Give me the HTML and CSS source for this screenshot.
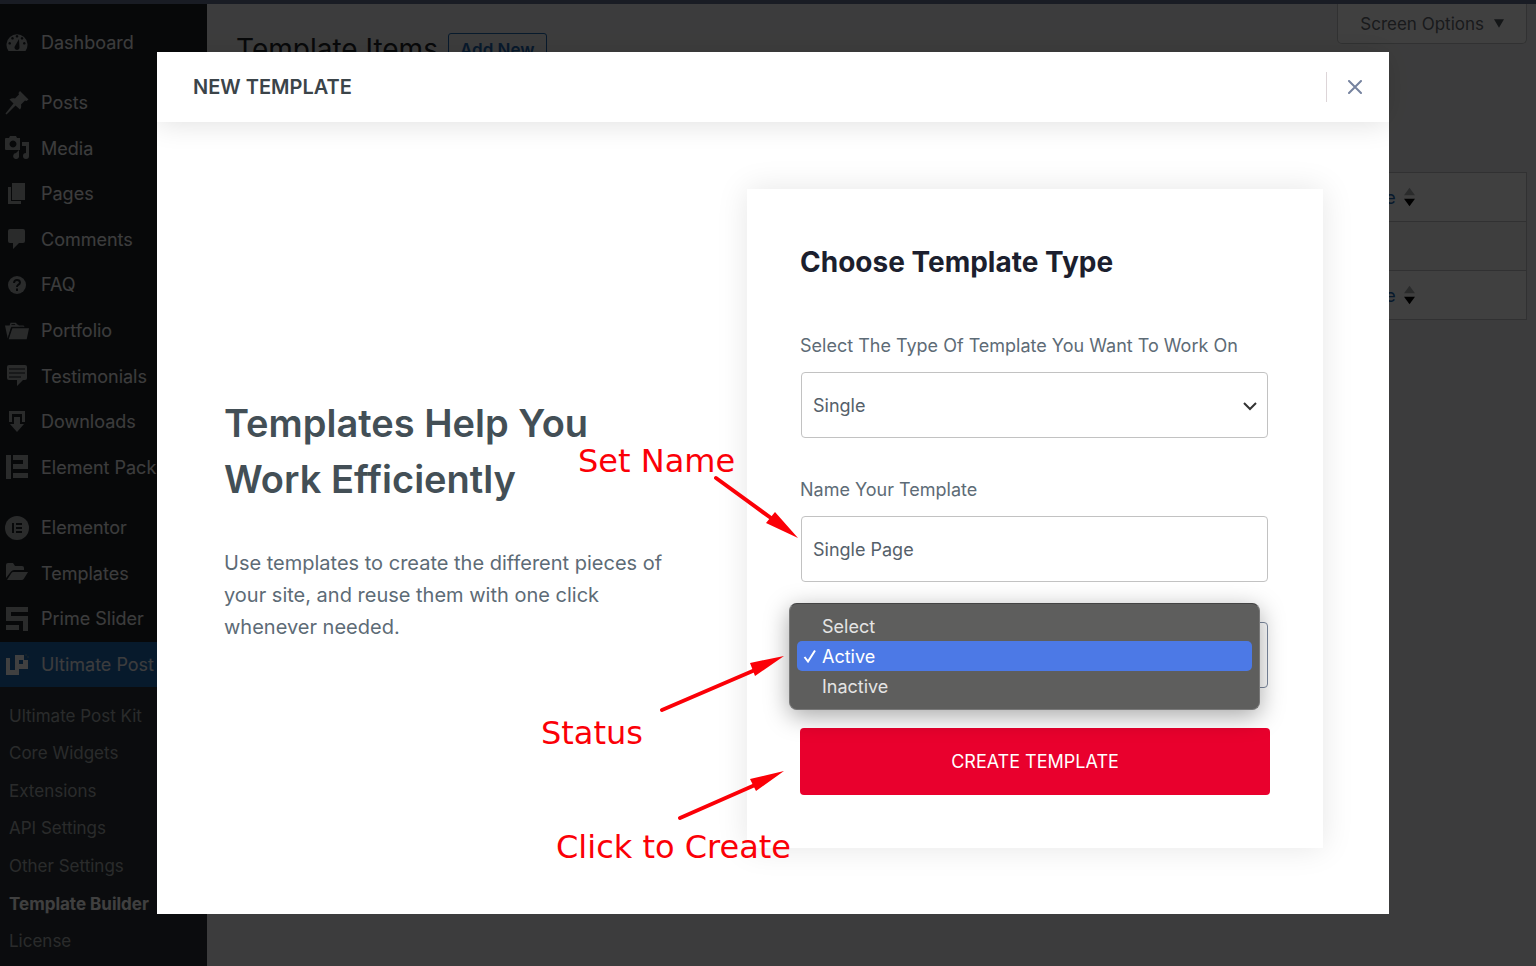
FILE: index.html
```html
<!DOCTYPE html>
<html lang="en">
<head>
  <meta charset="UTF-8">
  <meta name="viewport" content="width=device-width, initial-scale=1.0">
  <title>Template Items</title>
  <link rel="stylesheet" href="styles.css">
</head>
<body>
  <div class="topbar"></div>

  <div class="admin">
    <!-- Admin menu -->
    <nav class="sidebar">
      <ul class="menu menu-first">
        <li><a href="#"><svg class="icon" viewBox="0 0 24 24"><path fill-rule="evenodd" d="M3.500 20A10.500 10.500 0 1 1 20.500 20ZM12 4a1.300 1.300 0 1 0 .01 0ZM7.500 6a1.300 1.300 0 1 0 .01 0ZM17 6a1.300 1.300 0 1 0 .01 0ZM4.700 11a1.300 1.300 0 1 0 .01 0ZM19.300 11a1.300 1.300 0 1 0 .01 0ZM14 8l-4 7a2.500 2.500 0 1 0 4.500 1.500Z"/></svg>Dashboard</a></li>
      </ul>
      <ul class="menu menu-content">
        <li><a href="#"><svg class="icon" viewBox="0 0 24 24"><path d="M15 0l8.500 8.500-2 1.500-1.500-.5-4 4c.5 2 0 4-1 5L10.500 14.500 1.500 23.500.5 22.500 8.500 12.500 4.500 8.500c1.500-1.200 3.500-1.500 5.500-1l4-4L13.500 2Z"/></svg>Posts</a></li>
        <li><a href="#"><svg class="icon" viewBox="0 0 24 24"><path fill-rule="evenodd" d="M1 2h3l1-2h6l1 2h3v12H1Q0 14 0 13V3Q0 2 1 2ZM8 4.500a3.500 3.500 0 1 0 .01 0ZM17 6h7v14a3 3 0 1 1-3-3V10h-4ZM14 14v7a3 3 0 1 1-3-4Z"/></svg>Media</a></li>
        <li><a href="#"><svg class="icon" viewBox="0 0 24 24"><path d="M7 1h13v17H7ZM3 5h3v14h10v3H3Z"/></svg>Pages</a></li>
        <li><a href="#"><svg class="icon" viewBox="0 0 24 24"><path d="M5 2h13q2 0 2 2v10q0 2-2 2h-4l-6 6v-6H5q-2 0-2-2V4q0-2 2-2Z"/></svg>Comments</a></li>
        <li><a href="#"><svg class="icon" viewBox="0 0 24 24"><circle cx="12" cy="12" r="9"/><path class="cut" d="M9 10q.2-3 3-3t3 2.500Q15 11 13 12q-1 .8-1 2M12 15.500v2.500"/></svg>FAQ</a></li>
        <li><a href="#"><svg class="icon icon-wide" viewBox="0 0 26 24"><path d="M0 6h5l1-3h6l1 2h1l1 1h5l1 1v1H7L3 20ZM8 9h18l-2.500 12H4Z"/><path class="seam" d="M7 8l-4 13M7 8h19M7 5h4M16 8h4"/></svg>Portfolio</a></li>
        <li><a href="#"><svg class="icon" viewBox="0 0 24 24"><path d="M4 1h16q2 0 2 2v11q0 2-2 2h-2l-6 6v-6H4q-2 0-2-2V3q0-2 2-2Z"/><path class="seam" d="M4 5h16M4 9h16M4 13h12"/></svg>Testimonials</a></li>
        <li><a href="#"><svg class="icon" viewBox="0 0 24 24"><path d="M4 1h16v11h-3V4H7v8H4ZM9 7h6v7h4l-7 8-7-8h4Z"/></svg>Downloads</a></li>
        <li><a href="#"><svg class="icon" viewBox="0 0 24 24"><path d="M1 0h5v24H1ZM8 0h15v14H8V9h10V5H8ZM8 18h15v5H8Z"/></svg>Element Pack</a></li>
      </ul>
      <ul class="menu menu-plugins">
        <li><a href="#"><svg class="icon" viewBox="0 0 24 24"><circle cx="12" cy="12" r="12"/><path class="cut" d="M8 7v10M11 8h6M11 12h6M11 16h6"/></svg>Elementor</a></li>
        <li><a href="#"><svg class="icon" viewBox="0 0 24 24"><path d="M1 17V4q0-2 2-2h5l2 3h7q2 0 2 2v2H9q-2 0-3 1.500ZM8.500 11H23l-4 6.500q-.8 1.500-2.500 1.500H2l4.500-7Q7 11 8.500 11Z"/></svg>Templates</a></li>
        <li><a href="#"><svg class="icon" viewBox="0 0 24 24"><path d="M1 0h22v5H6v4h17v15h-5V14H1ZM1 18h13v5H1Z"/></svg>Prime Slider</a></li>
        <li class="current"><a href="#"><svg class="icon" viewBox="0 0 24 24"><path fill-rule="evenodd" d="M1 6h4v12h5V3h9v5h4v9h-9v6H1ZM14 8v4h4V8Z"/><path class="spark" d="M20 2h2v2h-2ZM22 4h2v2h-2Z"/></svg>Ultimate Post Kit</a></li>
      </ul>
      <ul class="submenu">
        <li><a href="#">Ultimate Post Kit</a></li>
        <li><a href="#">Core Widgets</a></li>
        <li><a href="#">Extensions</a></li>
        <li><a href="#">API Settings</a></li>
        <li><a href="#">Other Settings</a></li>
        <li class="selected"><a href="#">Template Builder</a></li>
        <li><a href="#">License</a></li>
      </ul>
    </nav>

    <!-- Page behind the dialog -->
    <main class="page">
      <div class="page-head">
        <h1>Template Items</h1>
        <a class="add-new" href="#">Add New</a>
        <button class="screen-options" type="button">Screen Options <svg viewBox="0 0 12 10"><path d="M0 0h12L6 10Z"/></svg></button>
      </div>
      <table class="items">
        <thead>
          <tr><th></th><th class="date"><a href="#">Date <svg class="sort" viewBox="0 0 12 20"><path class="up" d="M0 8h12L6 0Z"/><path d="M0 12h12l-6 8Z"/></svg></a></th></tr>
        </thead>
        <tbody>
          <tr><td></td><td></td></tr>
        </tbody>
        <tfoot>
          <tr><th></th><th class="date"><a href="#">Date <svg class="sort" viewBox="0 0 12 20"><path class="up" d="M0 8h12L6 0Z"/><path d="M0 12h12l-6 8Z"/></svg></a></th></tr>
        </tfoot>
      </table>
    </main>
  </div>

  <!-- New template dialog -->
  <div class="overlay">
    <div class="modal" role="dialog" aria-labelledby="modal-title">
      <header class="modal-head">
        <h2 id="modal-title">NEW TEMPLATE</h2>
        <button class="close" type="button" aria-label="Close"><svg viewBox="0 0 14 14"><path d="M1 1l12 12M13 1L1 13"/></svg></button>
      </header>

      <div class="modal-body">
        <div class="intro">
          <h2>Templates Help You<br>Work Efficiently</h2>
          <p>Use templates to create the different pieces of your site, and reuse them with one click whenever needed.</p>
        </div>

        <form class="card">
          <h3>Choose Template Type</h3>
          <label for="type">Select The Type Of Template You Want To Work On</label>
          <div class="field">
            <select id="type"><option>Single</option></select>
            <svg class="chevron" viewBox="0 0 16 10"><path d="M2 2l6 6 6-6"/></svg>
          </div>
          <label for="name">Name Your Template</label>
          <div class="field">
            <input id="name" type="text" value="Single Page">
          </div>
          <div class="field status">
            <select aria-label="Status"><option>Active</option></select>
            <ul class="options" role="listbox" aria-label="Status">
              <li role="option">Select</li>
              <li role="option" class="active" aria-selected="true"><svg viewBox="0 0 14 14"><path d="M1.500 8l3.500 4.500L12 1.500"/></svg>Active</li>
              <li role="option">Inactive</li>
            </ul>
          </div>
          <button class="create" type="button">CREATE TEMPLATE</button>
        </form>
      </div>

      <!-- Callouts -->
      <svg class="arrows" viewBox="0 0 1232 862">
        <path class="line" d="M559 426L614 466M505 658L598 618M523 766L598 733"/>
        <path d="M641 486L609 471 618 460ZM627 604L598 624 593 611ZM627 719L599 739 593 727Z"/>
      </svg>
      <span class="note note-name">Set Name</span>
      <span class="note note-status">Status</span>
      <span class="note note-create">Click to Create</span>
    </div>
  </div>
</body>
</html>
```
FILE: styles.css
```css
* {
  box-sizing: border-box;
  margin: 0;
  padding: 0;
}

body {
  background: #f0f0f1;
  color: #3c434a;
  font-family: Inter, "Liberation Sans", sans-serif;
  font-size: 18px;
  height: 100vh;
  overflow: hidden;
}

a {
  text-decoration: none;
}

ul {
  list-style: none;
}

button,
input,
select {
  font: inherit;
}

.topbar {
  height: 4px;
  background: #191c24;
  position: relative;
  z-index: 3;
}

.admin {
  display: flex;
  min-height: 100vh;
}

/* Sidebar */
.sidebar {
  width: 207px;
  flex-shrink: 0;
  padding-top: 16px;
  background: #1d2327;
}

.menu,
.submenu {
  display: grid;
  grid-auto-rows: 1fr;
}

.menu-first {
  height: 45px;
  margin-bottom: 15px;
}

.menu-content {
  height: 410px;
  margin-bottom: 15px;
}

.menu-plugins {
  height: 182px;
}

.menu a {
  display: flex;
  align-items: center;
  gap: 12px;
  height: 100%;
  padding-left: 5px;
  color: #f0f0f1;
  white-space: nowrap;
}

.menu .current {
  background: #1d67b1;
}

.icon {
  width: 24px;
  height: 24px;
  flex-shrink: 0;
  fill: #a7aaad;
}

.current .icon {
  fill: #fff;
}

.current .spark {
  fill: #4a7fa8;
}

.cut,
.seam {
  fill: none;
  stroke: #1d2327;
  stroke-width: 2;
}

.seam {
  stroke-width: 1;
}

.submenu {
  height: 279px;
  padding: 10px 0 6px 9px;
  background: #2c3338;
}

.submenu a {
  display: flex;
  align-items: center;
  height: 100%;
  color: #a7aaad;
  font-size: 17px;
  white-space: nowrap;
}

.submenu .selected a {
  color: #fff;
  font-weight: 700;
}

/* Page */
.page {
  flex: 1;
  padding: 0 9px 0 29px;
}

.page-head {
  display: flex;
  align-items: flex-start;
  height: 168px;
}

.page-head h1 {
  padding-top: 27px;
  color: #1d2327;
  font-size: 28px;
  font-weight: 400;
  line-height: 36px;
}

.add-new {
  margin: 29px auto 0 10px;
  padding: 4px 11px;
  border: 1px solid #1d67b1;
  border-radius: 3px;
  color: #1d67b1;
  font-size: 17px;
  font-weight: 600;
  line-height: 24px;
}

.screen-options {
  display: flex;
  align-items: center;
  gap: 10px;
  height: 40px;
  padding: 0 22px;
  background: #fff;
  border: 1px solid #c3c4c7;
  border-top: 0;
  border-radius: 0 0 5px 5px;
  color: #646970;
  font-size: 17px;
}

.screen-options svg {
  width: 10px;
  height: 9px;
  fill: #50575e;
}

.items {
  width: 100%;
  background: #fff;
  border: 1px solid #c3c4c7;
  border-collapse: collapse;
}

.items tr {
  height: 49px;
  border-bottom: 1px solid #c3c4c7;
}

.items tbody {
  background: #f6f7f7;
}

.date {
  width: 170px;
  font-weight: 400;
  text-align: left;
}

.date a {
  display: flex;
  align-items: center;
  gap: 8px;
  color: #1d67b1;
}

.sort {
  width: 11px;
  height: 20px;
}

.sort .up {
  fill: #a7aaad;
}

/* Dialog */
.overlay {
  position: fixed;
  inset: 0;
  z-index: 2;
  padding: 52px 147px 52px 157px;
  background: rgba(0, 0, 0, 0.75);
}

.modal {
  position: relative;
  background: #fff;
}

.modal-head {
  display: flex;
  align-items: center;
  justify-content: space-between;
  height: 70px;
  padding: 0 27px 0 36px;
  box-shadow: 0 0 30px rgba(0, 0, 0, 0.14);
}

.modal-head h2 {
  color: #3b4449;
  font-size: 20px;
  font-weight: 600;
}

.close {
  display: flex;
  align-items: center;
  height: 30px;
  padding-left: 21px;
  background: none;
  border: 0;
  border-left: 1px solid #ddd5d8;
}

.close svg {
  width: 14px;
  height: 14px;
  fill: none;
  stroke: #76839f;
  stroke-width: 2;
  stroke-linecap: round;
}

.modal-body {
  display: grid;
  grid-template-columns: 523fr 576fr;
  align-items: center;
  padding: 67px 66px 66px 67px;
}

.intro {
  padding-right: 64px;
}

.intro h2 {
  margin-bottom: 40px;
  color: #434f56;
  font-size: 38px;
  font-weight: 600;
  line-height: 56px;
}

.intro p {
  color: #5d6b76;
  font-size: 20px;
  line-height: 32px;
}

.card {
  padding: 53px;
  box-shadow: 0 0 30px rgba(0, 0, 0, 0.1);
}

.card h3 {
  margin-bottom: 52px;
  color: #1c1f2e;
  font-size: 28px;
  font-weight: 700;
  line-height: 40px;
}

.card label {
  display: block;
  margin-bottom: 14px;
  color: #5d6b76;
  font-size: 18px;
  line-height: 24px;
  white-space: nowrap;
}

.field {
  position: relative;
  margin: 0 2px 40px 1px;
}

.field input,
.field select {
  display: block;
  width: 100%;
  height: 66px;
  padding: 0 11px;
  appearance: none;
  background: #fff;
  border: 1px solid #c2c2c2;
  border-radius: 4px;
  color: #55606a;
}

.chevron {
  position: absolute;
  top: 29px;
  right: 10px;
  width: 16px;
  height: 10px;
  fill: none;
  stroke: #333;
  stroke-width: 2;
}

.status select {
  border-color: #7d8aa0;
}

.options {
  position: absolute;
  top: -19px;
  left: -12px;
  right: 8px;
  padding: 7px 7px 8px;
  background: #5e5e5d;
  border: 1px solid #777;
  border-top-color: #444;
  border-radius: 8px;
  box-shadow: 0 6px 24px rgba(0, 0, 0, 0.35);
  color: #e4e4e4;
}

.options li {
  display: flex;
  align-items: center;
  height: 30px;
  padding-left: 25px;
}

.options .active {
  gap: 5px;
  padding-left: 6px;
  background: #4c79e6;
  border-radius: 5px;
  color: #fff;
}

.options svg {
  width: 14px;
  height: 14px;
  fill: none;
  stroke: #fff;
  stroke-width: 2;
}

.create {
  display: block;
  width: 100%;
  height: 67px;
  background: #e9002d;
  border: 0;
  border-radius: 4px;
  color: #fff;
  font-size: 18px;
}

/* Callouts */
.arrows {
  position: absolute;
  top: 0;
  left: 0;
  width: 100%;
  fill: #fb0007;
  pointer-events: none;
}

.arrows .line {
  fill: none;
  stroke: #fb0007;
  stroke-width: 4;
  stroke-linecap: round;
}

.note {
  position: absolute;
  color: #fb0007;
  font-family: "DejaVu Sans", sans-serif;
  font-size: 32px;
  line-height: 40px;
  white-space: nowrap;
}

.note-name {
  top: 389px;
  left: 421px;
}

.note-status {
  top: 661px;
  left: 384px;
}

.note-create {
  top: 775px;
  left: 399px;
}
```
